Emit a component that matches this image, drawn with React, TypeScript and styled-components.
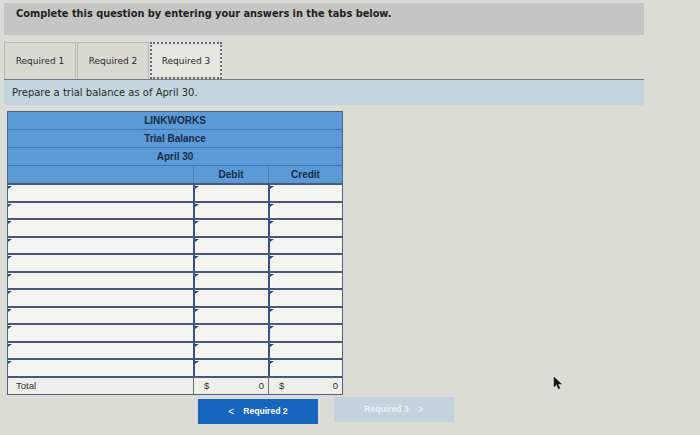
import * as React from 'react';
import styled, { createGlobalStyle } from 'styled-components';

const GlobalStyle = createGlobalStyle`
  html, body {
    margin: 0;
    padding: 0;
    background: #dcdcd6;
  }
  body {
    width: 700px;
    height: 435px;
    overflow: hidden;
    position: relative;
  }
`;

const Page = styled.div`
  padding: 3px 0 0 4px;
  width: 640px;
  font-family: 'DejaVu Sans', Verdana, sans-serif;
  color: #222;
`;

const Banner = styled.div`
  height: 32px;
  background: #c5c5c2;
  padding: 5px 0 0 12px;
  box-sizing: border-box;
  font-size: 9.8px;
  font-weight: bold;
  color: #1e1e1e;
`;

const TabRow = styled.div`
  display: flex;
  margin-top: 7px;
  height: 37px;
`;

const Tab = styled.div<{ $active?: boolean }>`
  width: 72px;
  box-sizing: border-box;
  display: flex;
  align-items: center;
  justify-content: center;
  font-size: 9px;
  color: #2a2a2a;
  background: ${(p) => (p.$active ? '#e7e7e2' : '#d9d9d4')};
  border: ${(p) => (p.$active ? '2px dotted #6a6a70' : '1px solid #b9b9b4')};
  border-bottom: ${(p) => (p.$active ? '2px dotted #6a6a70' : 'none')};
  margin-right: 1px;
`;

const Prompt = styled.div`
  height: 26px;
  background: #c3d6df;
  border-top: 1px solid #77797c;
  box-sizing: border-box;
  padding-left: 8px;
  display: flex;
  align-items: center;
  font-size: 10px;
  color: #2a2a2a;
`;

const Table = styled.div`
  margin: 6px 0 0 3px;
  width: 334px;
  font-family: 'Liberation Sans', Arial, sans-serif;
  border: 1px solid #4d6182;
`;

const TitleRow = styled.div`
  height: 18px;
  background: #5b9ad7;
  border-bottom: 1px solid #3f73b5;
  box-sizing: border-box;
  display: flex;
  align-items: center;
  justify-content: center;
  font-size: 10px;
  font-weight: bold;
  color: #1a2c48;
`;

const Row = styled.div<{ $h?: number }>`
  display: grid;
  grid-template-columns: 185px 75px 1fr;
  height: ${(p) => p.$h ?? 17.5}px;
`;

const HeadCell = styled.div`
  background: #5b9ad7;
  border-left: 1px solid #4a7fc0;
  display: flex;
  align-items: center;
  justify-content: center;
  font-size: 10px;
  font-weight: bold;
  color: #1a2c48;
  &:first-child {
    border-left: none;
  }
`;

const InputCell = styled.div`
  position: relative;
  background: #f4f4f1;
  border-top: 2px solid #4a5878;
  border-left: 2px solid #3a5188;
  box-sizing: border-box;
  &:first-child {
    border-left: none;
  }
  &::before {
    content: '';
    position: absolute;
    left: 0;
    top: 1px;
    border-left: 4px solid #2c4a8a;
    border-bottom: 3px solid transparent;
  }
`;

const TotalCell = styled.div`
  background: #eeeeea;
  border-top: 2px solid #4a5878;
  border-left: 1px solid #6b6f78;
  box-sizing: border-box;
  display: flex;
  align-items: center;
  justify-content: space-between;
  padding: 0 4px 0 10px;
  font-size: 9.5px;
  color: #333;
  &:first-child {
    border-left: none;
    padding-left: 8px;
  }
`;

const NavRow = styled.div`
  display: flex;
  align-items: flex-start;
  gap: 16px;
  margin: 4px 0 0 194px;
`;

const NavButton = styled.div<{ $disabled?: boolean }>`
  width: 120px;
  height: 25px;
  margin-top: ${(p) => (p.$disabled ? '-2px' : '0')};
  background: ${(p) => (p.$disabled ? '#c5d1db' : '#1765bf')};
  color: ${(p) => (p.$disabled ? '#eef2f6' : '#ffffff')};
  display: flex;
  align-items: center;
  justify-content: center;
  gap: 9px;
  font-family: 'Liberation Sans', Arial, sans-serif;
  font-size: 8.6px;
  font-weight: bold;
`;

const Chevron = styled.span`
  font-size: 10px;
  font-weight: normal;
`;

const Cursor = styled.svg`
  position: absolute;
  left: 553px;
  top: 376px;
`;

const rows = Array.from({ length: 11 }, (_, i) => i);

export default function App() {
  return (
    <>
      <GlobalStyle />
      <Page>
        <Banner>Complete this question by entering your answers in the tabs below.</Banner>
        <TabRow>
          <Tab>Required 1</Tab>
          <Tab>Required 2</Tab>
          <Tab $active>Required 3</Tab>
        </TabRow>
        <Prompt>Prepare a trial balance as of April 30.</Prompt>
        <Table>
          <TitleRow>LINKWORKS</TitleRow>
          <TitleRow>Trial Balance</TitleRow>
          <TitleRow>April 30</TitleRow>
          <Row $h={17}>
            <HeadCell />
            <HeadCell>Debit</HeadCell>
            <HeadCell>Credit</HeadCell>
          </Row>
          {rows.map((r) => (
            <Row key={r}>
              <InputCell />
              <InputCell />
              <InputCell />
            </Row>
          ))}
          <Row $h={18}>
            <TotalCell>Total</TotalCell>
            <TotalCell>
              <span>$</span>
              <span>0</span>
            </TotalCell>
            <TotalCell>
              <span>$</span>
              <span>0</span>
            </TotalCell>
          </Row>
        </Table>
        <NavRow>
          <NavButton>
            <Chevron>&lt;</Chevron>
            Required 2
          </NavButton>
          <NavButton $disabled>
            Required 3
            <Chevron>&gt;</Chevron>
          </NavButton>
        </NavRow>
      </Page>
      <Cursor width="10" height="14" viewBox="0 0 10 14">
        <path d="M1 1 L1 11 L3.5 8.5 L5.5 13 L7 12.3 L5 8 L8.5 8 Z" fill="#111" stroke="#333" strokeWidth="0.5" />
      </Cursor>
    </>
  );
}
